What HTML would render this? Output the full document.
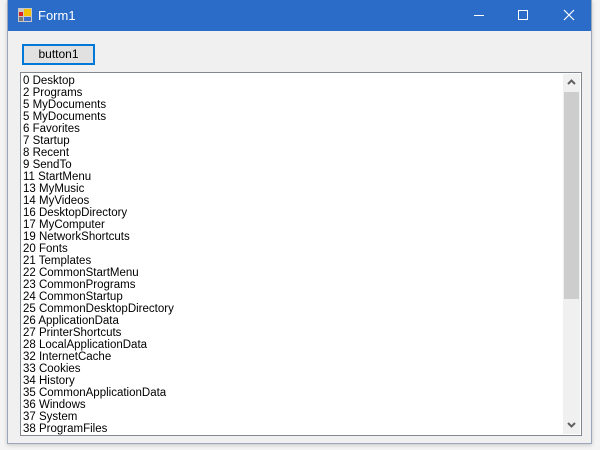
<!DOCTYPE html>
<html><head><style>
*{margin:0;padding:0;box-sizing:border-box}
body{width:600px;height:450px;background:#f4f4f4;position:relative;overflow:hidden;font-family:"Liberation Sans","Noto Sans CJK JP",sans-serif}
.win{position:absolute;left:7px;top:0;width:585px;height:444px;background:#f0f0f0;border:1px solid #9aa7b8;border-top:none;box-shadow:0 1px 4px rgba(0,0,0,.2)}
.title{position:absolute;left:0;top:0;width:100%;height:31px;background:#2b6cc9;color:#fff;font-size:13px}
.btn{position:absolute;left:14px;top:44px;width:73px;height:21px;border:2px solid #0078d7;background:#e1e1e1;font-size:12px;text-align:center;line-height:17px}
.lb{position:absolute;left:12px;top:72px;width:562px;height:364px;background:#fff;border:1px solid #828790}
.items{position:absolute;left:2px;top:2px;font-size:11.5px;line-height:12px;color:#000;white-space:pre}
.sb{position:absolute;right:1px;top:1px;width:17px;height:360px;background:#f0f0f0}
.thumb{position:absolute;left:1px;top:18px;width:15px;height:207px;background:#cdcdcd}
</style></head><body>
<div class="win">
<div class="title">
<svg style="position:absolute;left:10px;top:8px" width="14" height="14"><rect x="0" y="0" width="14" height="14" fill="#c8c8c8"/><rect x="1" y="4" width="4" height="4" fill="#d22"/><rect x="6" y="1" width="7" height="7" fill="#f2c200"/><rect x="6" y="9" width="7" height="4" fill="#3a6fd0"/><rect x="1" y="9" width="4" height="4" fill="#777"/></svg>
<span style="position:absolute;left:30px;top:8px">Form1</span>
<div style="position:absolute;left:466px;top:15px;width:10px;height:1px;background:#fff"></div>
<div style="position:absolute;left:510px;top:10px;width:10px;height:10px;border:1px solid #fff"></div>
<svg style="position:absolute;left:555px;top:9px" width="12" height="12"><path d="M1 1L11 11M11 1L1 11" stroke="#fff" stroke-width="1.2"/></svg>
</div>
<div class="btn">button1</div>
<div class="lb">
<div class="items">0 Desktop
2 Programs
5 MyDocuments
5 MyDocuments
6 Favorites
7 Startup
8 Recent
9 SendTo
11 StartMenu
13 MyMusic
14 MyVideos
16 DesktopDirectory
17 MyComputer
19 NetworkShortcuts
20 Fonts
21 Templates
22 CommonStartMenu
23 CommonPrograms
24 CommonStartup
25 CommonDesktopDirectory
26 ApplicationData
27 PrinterShortcuts
28 LocalApplicationData
32 InternetCache
33 Cookies
34 History
35 CommonApplicationData
36 Windows
37 System
38 ProgramFiles</div>
<div class="sb">
<svg style="position:absolute;left:4px;top:5px" width="9" height="6"><path d="M1 5L4.5 1.5L8 5" stroke="#606060" stroke-width="2" fill="none"/></svg>
<div class="thumb"></div>
<svg style="position:absolute;left:4px;top:348px" width="9" height="6"><path d="M1 1L4.5 4.5L8 1" stroke="#606060" stroke-width="2" fill="none"/></svg>
</div>
</div>
</div>
</body></html>
